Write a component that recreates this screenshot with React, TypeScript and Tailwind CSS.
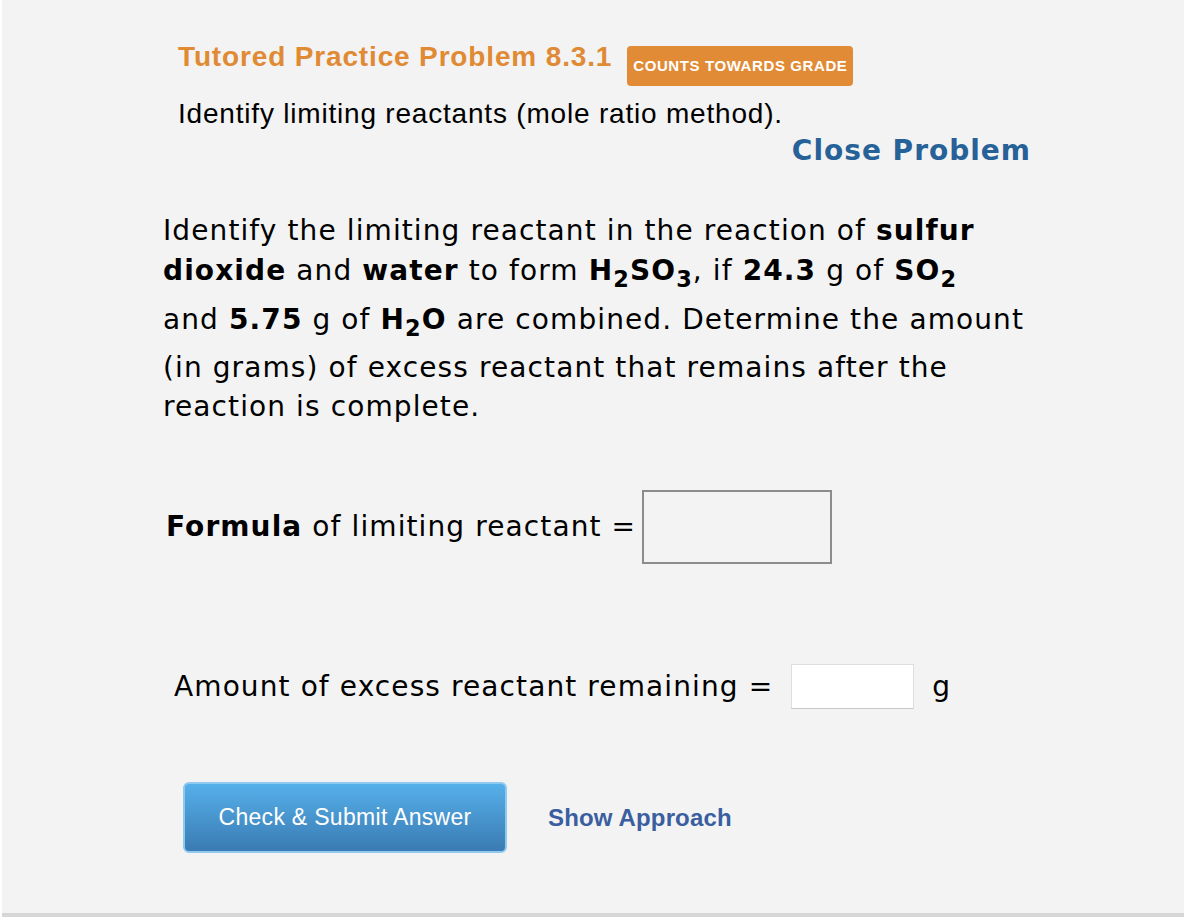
export default function App() {
  const verdana = "font-['DejaVu_Sans',Verdana,sans-serif] tracking-[1.1px]";
  const arial = "font-['Liberation_Sans',Arial,sans-serif]";
  const sub = "bottom-[-0.32em] text-[80%]";
  return (
    <div className="min-h-[920px] bg-white">
      <div className="mx-[2px] flex h-[917px] flex-col border-b-4 border-[#d6d6d6] bg-[#f3f3f3]">
        {/* header */}
        <div className="w-[1029px] pl-[176px] pt-[41px]">
          <div className={`flex items-start gap-[15px] ${arial}`}>
            <h1 className="text-[28px] leading-[32px] font-bold tracking-[0.85px] text-[#e08a34]">
              Tutored Practice Problem 8.3.1
            </h1>
            <span className="mt-[5px] flex h-[40px] items-center rounded-[4px] bg-[#e18b36] px-[6px] text-[15px] font-bold tracking-[0.6px] text-white">
              COUNTS TOWARDS GRADE
            </span>
          </div>
          <p className={`mt-[12px] ${arial} text-[28px] leading-[32px] tracking-[0.8px] text-black`}>
            Identify limiting reactants (mole ratio method).
          </p>
          <div className={`mt-[5px] text-right ${verdana} text-[28px] leading-[32px] font-bold tracking-[1px] text-[#266198]`}>
            Close Problem
          </div>
        </div>

        <div className={`${verdana} text-[28px] text-black`}>
          {/* question text */}
          <div className="ml-[161px] mt-[44px]">
            <div className="h-[40px] leading-[40px]">
              Identify the limiting reactant in the reaction of <b>sulfur</b>
            </div>
            <div className="h-[49px] leading-[40px]">
              <b>dioxide</b> and <b>water</b> to form{" "}
              <b>
                H<sub className={sub}>2</sub>SO<sub className={sub}>3</sub>
              </b>
              , if <b>24.3</b> g of{" "}
              <b>
                SO<sub className={sub}>2</sub>
              </b>
            </div>
            <div className="h-[48px] leading-[40px]">
              and <b>5.75</b> g of{" "}
              <b>
                H<sub className={sub}>2</sub>O
              </b>{" "}
              are combined. Determine the amount
            </div>
            <div className="h-[39px] leading-[40px]">(in grams) of excess reactant that remains after the</div>
            <div className="h-[40px] leading-[40px]">reaction is complete.</div>
          </div>

          <div className="ml-[164px] mt-[63px] flex items-center">
            <span>
              <b>Formula</b> of limiting reactant =
            </span>
            <div className="ml-[6px] h-[74px] w-[190px] border-2 border-[#8c8c8c] bg-[#f3f3f3]" />
          </div>

          <div className="ml-[172px] mt-[100px] flex items-center">
            <span>Amount of excess reactant remaining =</span>
            <div className="ml-[18px] h-[45px] w-[123px] border border-[#dedede] border-b-[#c6c6c6] bg-white" />
            <span className="ml-[18px]">g</span>
          </div>

          <div className="ml-[181px] mt-[73px] flex items-center">
            <button
              className={`h-[71px] w-[324px] rounded-[6px] border-2 border-[#8fc9ef] bg-gradient-to-b from-[#56b0ea] to-[#3a7bb3] ${arial} text-[23px] tracking-[0.3px] text-white`}
            >
              Check &amp; Submit Answer
            </button>
            <span className={`ml-[41px] ${arial} text-[24px] font-bold tracking-[0.15px] text-[#3a5e9f]`}>
              Show Approach
            </span>
          </div>
        </div>
      </div>
    </div>
  );
}
